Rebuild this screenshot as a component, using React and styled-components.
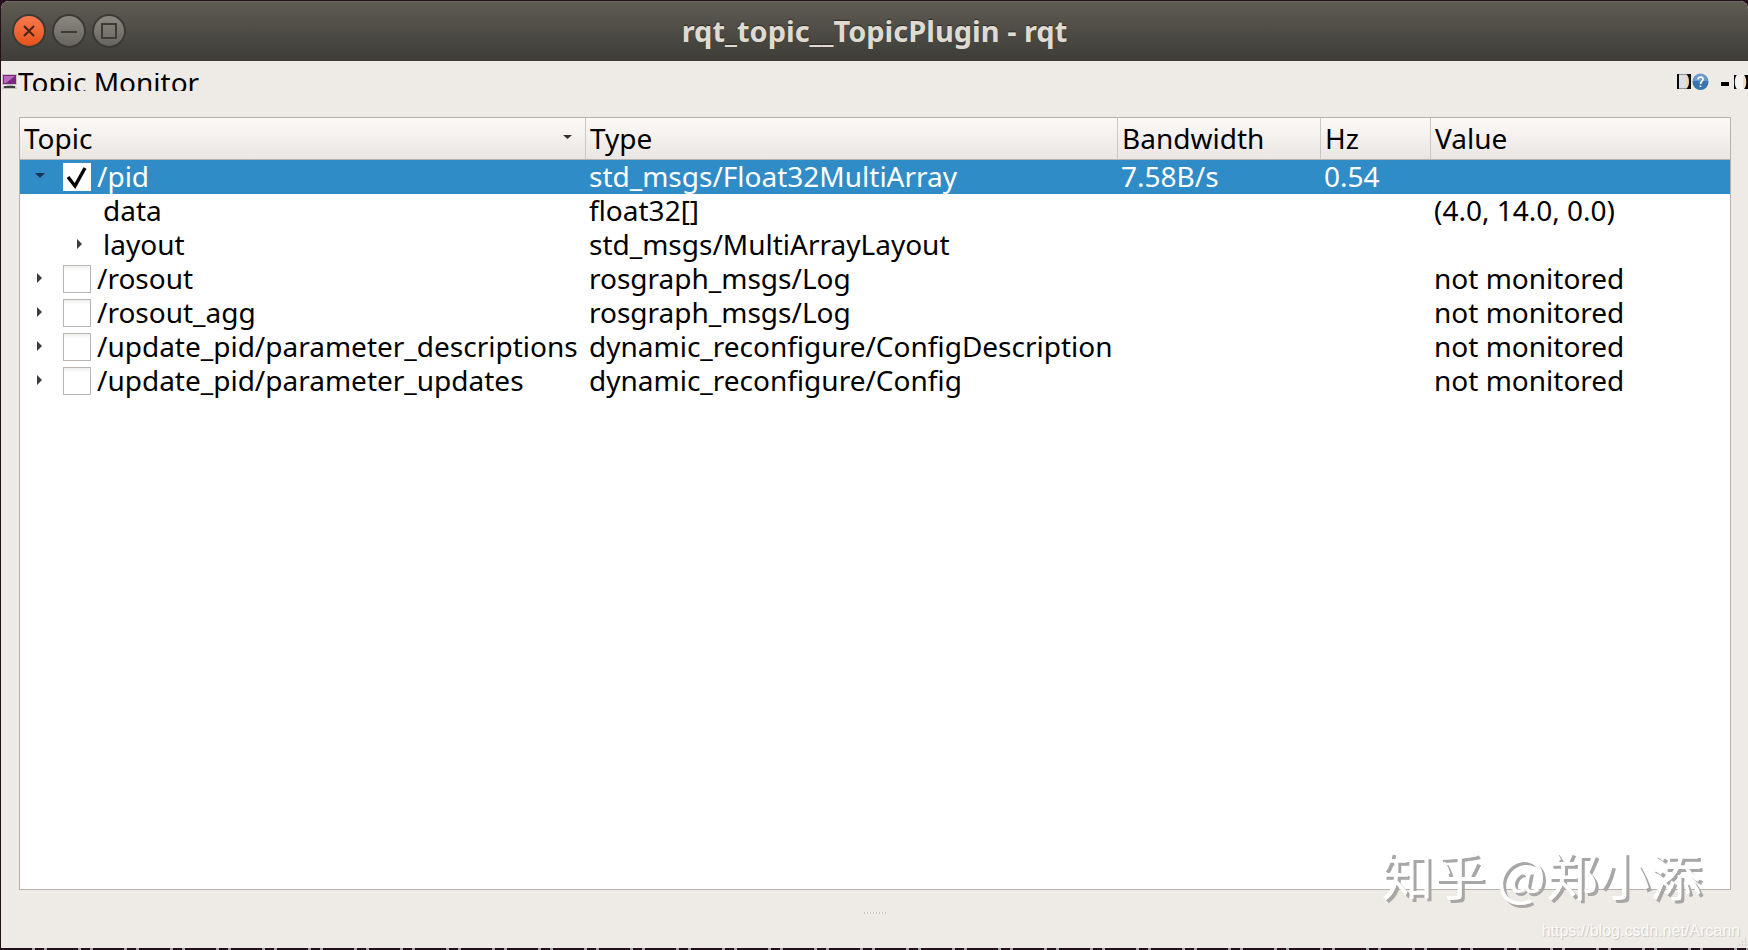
import React, { useState } from "react";
import styled, { createGlobalStyle } from "styled-components";

const GlobalStyle = createGlobalStyle`
  * {
    box-sizing: border-box;
  }
  body {
    margin: 0;
    background: #24101c;
    font-family: "Noto Sans", "Noto Sans CJK SC", sans-serif;
    color: #000;
  }
`;

const Desktop = styled.div`
  min-height: 100vh;
  display: flex;
  flex-direction: column;
  padding: 1px 0 0 1px;
  background: #24101c;
`;

const Window = styled.div`
  flex: 1;
  display: flex;
  flex-direction: column;
  position: relative;
  overflow: hidden;
  background: #eeebe7;
  border-radius: 8px 8px 0 0;
`;

const DesktopEdge = styled.div`
  height: 2px;
  background: repeating-linear-gradient(90deg, #24101c 0 31px, #a8a0a4 31px 34px, #24101c 34px 43px, #a8a0a4 43px 46px);
`;

const TitleBar = styled.header`
  height: 60px;
  display: grid;
  grid-template-columns: 1fr auto 1fr;
  align-items: center;
  padding: 0 11px 2px;
  background: linear-gradient(#5e5b52, #3d3c37);
  border-top: 1px solid #6b685f;
`;

const WindowButtons = styled.div`
  display: flex;
  gap: 6px;
`;

const RoundButton = styled.button`
  width: 34px;
  height: 34px;
  padding: 0;
  border: 2px solid #3b3a35;
  border-radius: 50%;
  color: ${(props) => (props.$close ? "#4a2412" : "#3c3b36")};
  background: ${(props) =>
    props.$close
      ? "linear-gradient(#f8794f, #e4531c)"
      : "linear-gradient(#8b887f, #66645d)"};
  svg {
    display: block;
  }
`;

const WindowTitle = styled.h1`
  margin: 0;
  font-size: 29px;
  line-height: 40px;
  font-weight: 700;
  color: #dfdbd2;
  text-shadow: 0 -1px 1px #2c2b27;
`;

const DockBar = styled.div`
  height: 42px;
  display: flex;
  align-items: center;
  justify-content: space-between;
`;

const DockTitle = styled.div`
  display: flex;
  align-items: center;
  padding-left: 1px;
`;

const DockText = styled.h2`
  margin: 0;
  height: 18px;
  display: flex;
  align-items: center;
  overflow: hidden;
  font-size: 28px;
  line-height: 36px;
  font-weight: 400;
`;

const DockButtons = styled.div`
  display: flex;
  align-items: center;
`;

const DockButton = styled.button`
  padding: 0;
  border: 0;
  background: none;
  svg {
    display: block;
  }
`;

const Frame = styled.main`
  flex: 1;
  margin: 14px 17px 0 18px;
  background: #fff;
  border: 1px solid #b5b1ac;
`;

const Table = styled.table`
  width: 100%;
  table-layout: fixed;
  border-collapse: separate;
  border-spacing: 0;
  font-size: 28px;
  line-height: 32px;
`;

const Col = styled.col`
  width: ${(props) => props.$width};
`;

const HeadCell = styled.th`
  height: 42px;
  padding: 0 4px 2px;
  text-align: left;
  font-weight: 400;
  background: linear-gradient(#fcf9f7, #e9e6e3);
  border-bottom: 1px solid #b5b1ac;
  border-right: 1px solid #cbc7c3;
  &:last-child {
    border-right: 0;
  }
`;

const SortButton = styled.button`
  width: 100%;
  display: flex;
  align-items: center;
  justify-content: space-between;
  padding: 0 9px 0 0;
  border: 0;
  background: none;
  font: inherit;
  color: inherit;
`;

const Row = styled.tr`
  color: ${(props) => (props.$selected ? "#fff" : "#000")};
  background: ${(props) => (props.$selected ? "#308cc6" : "#fff")};
`;

const Cell = styled.td`
  height: 34px;
  padding: 0 0 2px 3px;
  white-space: nowrap;
`;

const TopicCell = styled.div`
  display: flex;
  align-items: center;
  padding-left: ${(props) => (props.$child ? "40px" : "0")};
`;

const Expander = styled.button`
  width: 40px;
  height: 32px;
  display: flex;
  align-items: center;
  padding: 0 0 0 11px;
  border: 0;
  background: none;
  color: ${(props) => (props.$selected ? "#12364f" : "#3c3c3c")};
`;

const Spacer = styled.span`
  width: 40px;
`;

const TopicLabel = styled.label`
  display: flex;
  align-items: center;
  gap: 6px;
`;

const CheckBox = styled.span`
  display: grid;
  padding-top: 2px;
  > * {
    grid-area: 1 / 1;
  }
  svg {
    pointer-events: none;
  }
`;

const Check = styled.input`
  appearance: none;
  width: 28px;
  height: 28px;
  margin: 0;
  border: 1px solid #b9b6b3;
  background: linear-gradient(#f1f0ef, #fff 5px);
  &:checked {
    border-color: #fff;
    background: #fff;
  }
`;

const Footer = styled.footer`
  height: 58px;
  display: flex;
  justify-content: center;
  padding-top: 22px;
`;

const Handle = styled.div`
  width: 22px;
  height: 2px;
  background: repeating-linear-gradient(90deg, #c4c0bb 0 1px, #f6f4f1 1px 3px);
`;

const AuthorMark = styled.div`
  position: absolute;
  right: 46px;
  bottom: 39px;
  font-size: 52px;
  line-height: 70px;
  font-family: "Noto Sans CJK SC", sans-serif;
  color: #fff;
  text-shadow: 3px 3px 0 #a9a7a5;
`;

const LinkMark = styled.a`
  position: absolute;
  right: 8px;
  bottom: 7px;
  font-size: 16px;
  line-height: 20px;
  font-family: "Liberation Sans", sans-serif;
  color: #fbfaf8;
  text-decoration: none;
  text-shadow: 1px 1px 1px #c9c5c1;
`;

const Grip = styled.svg`
  position: absolute;
  right: 0;
  bottom: 0;
`;

const topics = [
  { name: "/pid", type: "std_msgs/Float32MultiArray", bandwidth: "7.58B/s", hz: "0.54", value: "", open: true, selected: true },
  { name: "data", type: "float32[]", value: "(4.0, 14.0, 0.0)", child: true, leaf: true },
  { name: "layout", type: "std_msgs/MultiArrayLayout", value: "", child: true },
  { name: "/rosout", type: "rosgraph_msgs/Log", value: "not monitored" },
  { name: "/rosout_agg", type: "rosgraph_msgs/Log", value: "not monitored" },
  { name: "/update_pid/parameter_descriptions", type: "dynamic_reconfigure/ConfigDescription", value: "not monitored" },
  { name: "/update_pid/parameter_updates", type: "dynamic_reconfigure/Config", value: "not monitored" },
];

function Arrow({ down }) {
  return (
    <svg width="12" height="10" viewBox="0 0 12 10" aria-hidden="true">
      <path d={down ? "M1 2h10l-5 5z" : "M3 0v10l5-5z"} fill="currentColor" />
    </svg>
  );
}

function TopicRow({ topic, checked, onToggle }) {
  return (
    <Row $selected={topic.selected}>
      <Cell>
        <TopicCell $child={topic.child}>
          {topic.leaf ? (
            <Spacer />
          ) : (
            <Expander type="button" $selected={topic.selected} aria-label={"Expand " + topic.name}>
              <Arrow down={topic.open} />
            </Expander>
          )}
          {topic.child ? (
            topic.name
          ) : (
            <TopicLabel>
              <CheckBox>
                <Check type="checkbox" checked={checked} onChange={onToggle} />
                {checked && (
                  <svg width="28" height="28" viewBox="0 0 28 28" aria-hidden="true">
                    <path d="M5 14l7 9L22 5" fill="none" stroke="#000" strokeWidth="3.4" />
                  </svg>
                )}
              </CheckBox>
              {topic.name}
            </TopicLabel>
          )}
        </TopicCell>
      </Cell>
      <Cell>{topic.type}</Cell>
      <Cell>{topic.bandwidth}</Cell>
      <Cell>{topic.hz}</Cell>
      <Cell>{topic.value}</Cell>
    </Row>
  );
}

function App() {
  const [monitored, setMonitored] = useState(["/pid"]);

  const toggle = (name) => {
    if (monitored.includes(name)) {
      setMonitored(monitored.filter((item) => item !== name));
    } else {
      setMonitored([...monitored, name]);
    }
  };

  return (
    <Desktop>
      <GlobalStyle />
      <Window>
        <TitleBar>
          <WindowButtons>
            <RoundButton type="button" $close aria-label="Close">
              <svg width="30" height="30" viewBox="0 0 30 30" stroke="currentColor" strokeWidth="2">
                <path d="M10 10l10 10M20 10L10 20" />
              </svg>
            </RoundButton>
            <RoundButton type="button" aria-label="Minimize">
              <svg width="30" height="30" viewBox="0 0 30 30" stroke="currentColor" strokeWidth="2">
                <path d="M7 16h16" />
              </svg>
            </RoundButton>
            <RoundButton type="button" aria-label="Maximize">
              <svg width="30" height="30" viewBox="0 0 30 30" stroke="currentColor" strokeWidth="2" fill="none">
                <path d="M8 8h14v14H8z" />
              </svg>
            </RoundButton>
          </WindowButtons>
          <WindowTitle>rqt_topic__TopicPlugin - rqt</WindowTitle>
        </TitleBar>

        <DockBar>
          <DockTitle>
            <svg width="16" height="16" viewBox="0 0 16 16" aria-hidden="true">
              <path d="M0 0h15v11H0z" fill="#c9c6c8" />
              <path d="M1 1h13v9H1z" fill="#7d2680" />
              <path d="M2 2h11L4 9H2z" fill="#b96bbb" />
              <path d="M5 11h6v2H5z" fill="#b5b3b3" />
              <path d="M1 12h13l1 3H0z" fill="#c2c0c0" />
              <path d="M2 12h11v2H2z" fill="#3e3e3e" />
            </svg>
            <DockText>Topic Monitor</DockText>
          </DockTitle>
          <DockButtons>
            <DockButton type="button" aria-label="Dock options">
              <svg width="16" height="18" viewBox="0 0 16 18">
                <path d="M3 1h8v15H3z" fill="#dbe0e3" />
                <path d="M3 1h7v1H3zM3 15h7v1H3z" fill="#8d9499" />
                <path d="M10 2h3v13h-3z" fill="#f3d3ae" />
                <path d="M1 1h2v15H1z" fill="#05070f" />
                <path d="M10 1h5v15h-5c4-2 4-13 0-15z" fill="#0a0a0a" />
              </svg>
            </DockButton>
            <DockButton type="button" aria-label="Help">
              <svg width="17" height="18" viewBox="0 0 17 18">
                <circle cx="8.5" cy="9" r="8" fill="#3a74ae" />
                <path d="M1 8a7.5 7.5 0 0 1 15 0z" fill="#6c9bc8" />
                <path d="M6 6.5c0-3.5 5.5-3 5 0-.2 1.6-2.5 1.8-2.5 4.5M8.5 12.5v1.5" fill="none" stroke="#fff" strokeWidth="1.8" />
              </svg>
            </DockButton>
            <DockButton type="button" aria-label="Minimize panel">
              <svg width="24" height="18" viewBox="0 0 24 18">
                <path d="M12 9h8v4h-8z" />
              </svg>
            </DockButton>
            <DockButton type="button" aria-label="Close panel">
              <svg width="15" height="18" viewBox="0 0 15 18">
                <path d="M3 2h8v14H3z" fill="#f4f4f2" />
                <path d="M10 3h3v12h-3z" fill="#f6dcbc" />
                <path d="M1 2h3c-3 2-3 12 0 14H1z" />
                <path d="M11 2h4v14h-4c3-3 3-11 0-14z" />
              </svg>
            </DockButton>
          </DockButtons>
        </DockBar>

        <Frame>
          <Table>
            <colgroup>
              <Col $width="566px" />
              <Col $width="532px" />
              <Col $width="203px" />
              <Col $width="110px" />
              <Col $width="auto" />
            </colgroup>
            <thead>
              <tr>
                <HeadCell>
                  <SortButton type="button">
                    Topic
                    <svg width="9" height="10" viewBox="0 0 9 10" aria-hidden="true">
                      <path d="M0 2h9L4.5 6z" fill="#333" />
                    </svg>
                  </SortButton>
                </HeadCell>
                <HeadCell>Type</HeadCell>
                <HeadCell>Bandwidth</HeadCell>
                <HeadCell>Hz</HeadCell>
                <HeadCell>Value</HeadCell>
              </tr>
            </thead>
            <tbody>
              {topics.map((topic) => (
                <TopicRow
                  key={topic.name}
                  topic={topic}
                  checked={monitored.includes(topic.name)}
                  onToggle={() => toggle(topic.name)}
                />
              ))}
            </tbody>
          </Table>
        </Frame>

        <Footer>
          <Handle />
        </Footer>

        <AuthorMark>知乎 @郑小添</AuthorMark>
        <LinkMark href="https://blog.csdn.net/Arcann">https://blog.csdn.net/Arcann</LinkMark>
        <Grip width="10" height="10" viewBox="0 0 10 10" aria-hidden="true">
          <path d="M7 1h1M4 4h1M7 4h1M1 7h1M4 7h1M7 7h1" stroke="#b5b1ac" />
        </Grip>
      </Window>
      <DesktopEdge />
    </Desktop>
  );
}

export default App;
